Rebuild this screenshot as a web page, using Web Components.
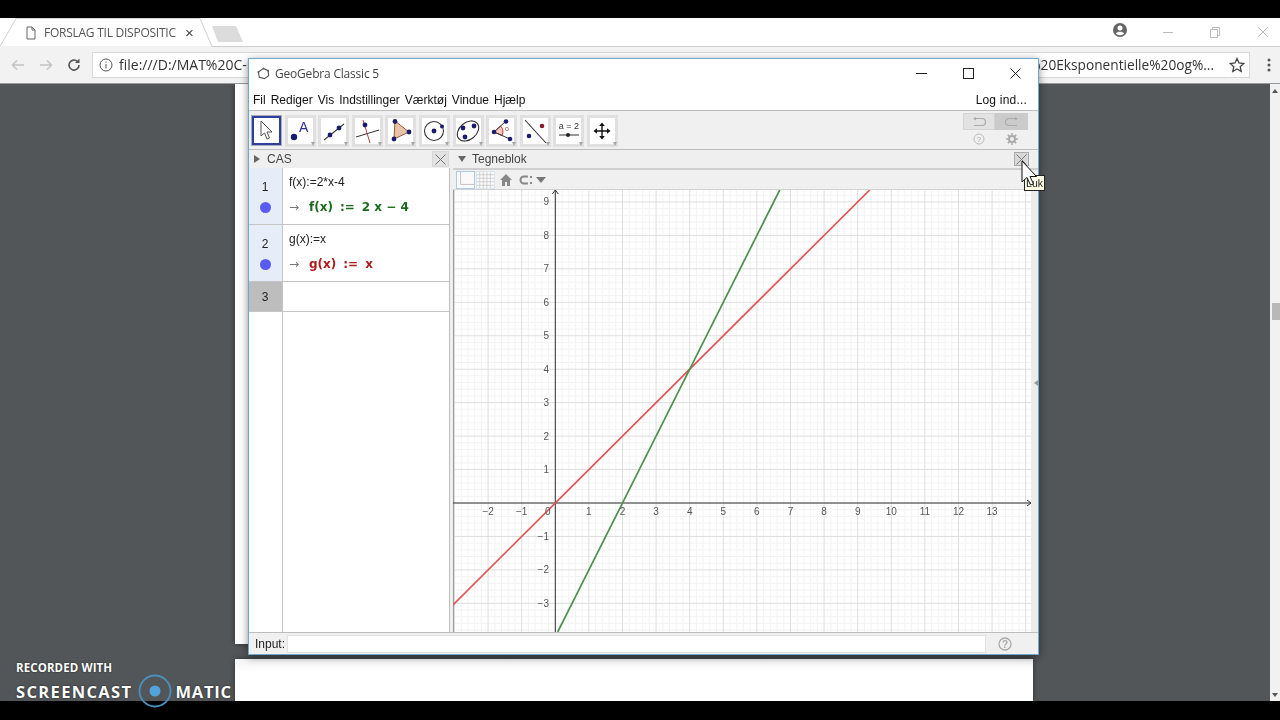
<!DOCTYPE html>
<html lang="da">
<head>
<meta charset="utf-8">
<title>GeoGebra Classic 5</title>
<style>
  html, body { margin: 0; height: 100%; overflow: hidden; background: #000; }
  body { display: flex; flex-direction: column; width: 1280px; height: 720px; position: relative; padding: 18px 0 19px; box-sizing: border-box; }
</style>
</head>
<body>
<browser-chrome></browser-chrome>
<pdf-area></pdf-area>
<gg-window>
  <gg-menubar></gg-menubar>
  <gg-toolbar>
    <gg-tool selected><svg viewBox="0 0 26 26"><path d="M8 4v15l3.500-3 2.500 6 2.500-1-2.500-6h5z" fill="#fff" stroke="#555" stroke-width="1"/></svg></gg-tool>
    <gg-tool><svg viewBox="0 0 26 26"><circle cx="7" cy="19" r="3.200" fill="#1a1a6e"/><text x="12" y="14" font-family="Liberation Sans" font-size="14" fill="#2a2a9a">A</text></svg></gg-tool>
    <gg-tool><svg viewBox="0 0 26 26"><path d="M3 22 23 6" stroke="#333" stroke-width="1.100"/><circle cx="9" cy="17" r="2.400" fill="#1a1a6e"/><circle cx="18" cy="10" r="2.400" fill="#1a1a6e"/></svg></gg-tool>
    <gg-tool><svg viewBox="0 0 26 26"><path d="M2 19 25 12" stroke="#333"/><path d="M9 2 16 25" stroke="#b9413a"/><circle cx="11" cy="7" r="2.400" fill="#1a1a6e"/></svg></gg-tool>
    <gg-tool><svg viewBox="0 0 26 26"><path d="M7 3 21 14 6 21z" fill="#e8c3a8" stroke="#9c5a3a"/><circle cx="7" cy="3.500" r="2.400" fill="#1a1a6e"/><circle cx="21" cy="14" r="2.400" fill="#1a1a6e"/><circle cx="6" cy="21" r="2.400" fill="#1a1a6e"/></svg></gg-tool>
    <gg-tool><svg viewBox="0 0 26 26"><circle cx="13" cy="13" r="9.500" fill="none" stroke="#333" stroke-width="1.100"/><circle cx="13" cy="13" r="2.400" fill="#1a1a6e"/><circle cx="21" cy="8.500" r="2" fill="#1a1a6e"/></svg></gg-tool>
    <gg-tool><svg viewBox="0 0 26 26"><ellipse cx="13" cy="13" rx="12" ry="8.500" transform="rotate(-40 13 13)" fill="none" stroke="#333" stroke-width="1.100"/><circle cx="8" cy="10" r="2.400" fill="#1a1a6e"/><circle cx="19" cy="8" r="2.400" fill="#1a1a6e"/><circle cx="10" cy="19" r="2.400" fill="#1a1a6e"/></svg></gg-tool>
    <gg-tool><svg viewBox="0 0 26 26"><path d="M5 14 11.500 8A8.500 8.500 0 0 1 13 17.500z" fill="#f3c9c2" stroke="#c0392b"/><path d="M17 3 5 14 21 21" fill="none" stroke="#333"/><circle cx="17" cy="3.500" r="2.300" fill="#1a1a6e"/><circle cx="5" cy="14" r="2.300" fill="#1a1a6e"/><circle cx="21" cy="21" r="2.300" fill="#1a1a6e"/><text x="16" y="13" font-family="Liberation Sans" font-size="7" fill="#a33">o</text></svg></gg-tool>
    <gg-tool><svg viewBox="0 0 26 26"><path d="M3 2 24 25" stroke="#333" stroke-width="1.100"/><circle cx="20" cy="8" r="2.300" fill="#8c1c2c"/><circle cx="7" cy="18" r="2.300" fill="#1a1a6e"/></svg></gg-tool>
    <gg-tool><svg viewBox="0 0 26 26"><text x="13" y="11" text-anchor="middle" font-family="Liberation Sans" font-size="9" fill="#333">a = 2</text><path d="M3 17H23" stroke="#333"/><circle cx="12" cy="17" r="2" fill="#222"/></svg></gg-tool>
    <gg-tool><svg viewBox="0 0 26 26"><path d="M13 7V19M7 13H19" stroke="#111" stroke-width="1.400"/><path d="M13 4.500l2.800 3.500h-5.600zM13 21.500l2.800-3.500h-5.600zM4.500 13l3.500-2.800v5.600zM21.500 13l-3.500-2.800v5.600z" fill="#111"/></svg></gg-tool>
    <gg-history slot="end"></gg-history>
  </gg-toolbar>
  <gg-workspace>
    <cas-view>
      <cas-row num="1" dot input="f(x):=2*x-4" color="#1c6b1c"><span>f(x)</span><span>:=</span><span>2 x − 4</span></cas-row>
      <cas-row num="2" dot input="g(x):=x" color="#b01c1c"><span>g(x)</span><span>:=</span><span>x</span></cas-row>
      <cas-row num="3" active></cas-row>
    </cas-view>
    <graphics-view></graphics-view>
  </gg-workspace>
  <gg-inputbar></gg-inputbar>
</gg-window>
<cursor-tip></cursor-tip>
<rec-mark></rec-mark>

<script>
const sans = `"Liberation Sans", Arial, sans-serif`;

class BrowserChrome extends HTMLElement {
  constructor() {
    super();
    this.attachShadow({ mode: 'open' }).innerHTML = `
      <style>
        :host { display: block; flex: none; font-family: "Open Sans", "Noto Sans", sans-serif; color: #444; filter: blur(.3px); }
        .strip { height: 28px; background: #fff; position: relative; display: flex; }
        .strip svg.shape { position: absolute; left: 0; top: 0; overflow: visible; }
        .tab { position: relative; display: flex; align-items: center; margin-left: 24px; width: 172px; font-size: 12px; letter-spacing: -.25px; gap: 6px; padding-top: 1px; }
        .tab .name { width: 132px; white-space: nowrap; color: #555; }
        .tab .x { font: 15px ${sans}; color: #444; margin-left: 3px; }
        .winbtns { margin-left: auto; display: flex; align-items: center; padding-right: 11px; position: relative; }
        .winbtns svg { display: block; }
        .bar { height: 38px; background: #f2f2f2; box-sizing: border-box; display: flex; align-items: center; padding: 0 0 0 10px; border-bottom: 1px solid #999; }
        .nav { display: flex; gap: 12px; align-items: center; margin-right: 10px; }
        .url { flex: none; width: 1158px; height: 26px; box-sizing: border-box; background: #fff; border: 1px solid #d8d8d8; display: flex; align-items: center; padding: 0 0 0 6px; font-size: 14px; color: #333; white-space: nowrap; }
        .url .gap { flex: 1; }
        .url .tail { font-size: 13.700px; }
        .url svg { flex: none; }
      </style>
      <div class="strip">
        <svg class="shape" width="1280" height="28"><path d="M212 8H236L243 24H218z" fill="#dcdcdc"/><path d="M0 28.500 16 .5H200L212 28.500H1280" fill="none" stroke="#cfcfcf"/></svg>
        <div class="tab">
          <svg width="14" height="16" viewBox="0 0 14 16"><path d="M3 2h5l3 3v9H3z" fill="#fff" stroke="#666"/><path d="M8 2v3h3" fill="none" stroke="#666"/></svg>
          <span class="name">FORSLAG TIL DISPOSITIC</span><span class="x">×</span>
        </div>
        <div class="winbtns">
          <svg width="16" height="16" viewBox="0 0 16 16" style="margin:-4px 34px 0 0"><path d="M8 1a7 7 0 1 0 0 14A7 7 0 0 0 8 1z" fill="#666"/><circle cx="8" cy="6" r="2.500" fill="#fff"/><path d="M3.800 11.500c1.500-2.500 6.900-2.500 8.400 0-2 2.200-6.400 2.200-8.400 0z" fill="#fff"/></svg>
          <svg width="12" height="12" style="margin-right:35px"><path d="M1 6.500H11" stroke="#bbb"/></svg>
          <svg width="12" height="12" style="margin-right:36px"><path d="M1.500 3.500h7v8h-7zM3.500 3.500v-2h7v8h-2" fill="none" stroke="#bbb"/></svg>
          <svg width="12" height="12"><path d="M1 1 11 11M11 1 1 11" stroke="#bbb"/></svg>
        </div>
      </div>
      <div class="bar">
        <div class="nav">
          <svg width="16" height="16" viewBox="0 0 16 16"><path d="M14 8H3M7 3.500 2.500 8 7 12.500" fill="none" stroke="#c4c4c4" stroke-width="1.500"/></svg>
          <svg width="16" height="16" viewBox="0 0 16 16"><path d="M2 8H13M9 3.500 13.500 8 9 12.500" fill="none" stroke="#c4c4c4" stroke-width="1.500"/></svg>
          <svg width="16" height="16" viewBox="0 0 16 16"><path d="M13 8a5 5 0 1 1-1.500-3.500" fill="none" stroke="#555" stroke-width="1.600"/><path d="M13.500 1.500v4.500H9z" fill="#555"/></svg>
        </div>
        <div class="url">
          <svg width="14" height="14" viewBox="0 0 14 14" style="margin-right:6px"><circle cx="7" cy="7" r="6" fill="none" stroke="#555"/><path d="M7 6v4.500M7 3.500v1.200" stroke="#555"/></svg>
          <span>file:///D:/MAT%20C-l</span><span class="gap"></span><span class="tail">%20Eksponentielle%20og%...</span>
          <svg width="16" height="16" viewBox="0 0 16 16" style="margin:0 4px 0 15px"><path d="M8 1.500 10 6l4.800.500-3.600 3.200 1 4.800L8 12l-4.200 2.500 1-4.800L1.200 6.500 6 6z" fill="none" stroke="#444" stroke-width="1.300"/></svg>
        </div>
        <svg width="4" height="16" viewBox="0 0 4 16" style="margin-left:17px"><circle cx="2" cy="3" r="1.500" fill="#555"/><circle cx="2" cy="8" r="1.500" fill="#555"/><circle cx="2" cy="13" r="1.500" fill="#555"/></svg>
      </div>`;
  }
}
customElements.define('browser-chrome', BrowserChrome);

class PdfArea extends HTMLElement {
  constructor() {
    super();
    this.attachShadow({ mode: 'open' }).innerHTML = `
      <style>
        :host { display: flex; flex: 1; min-height: 0; background: #525659; }
        .pages { flex: 1; display: flex; flex-direction: column; gap: 15px; padding-left: 235px; overflow: hidden; }
        .page { width: 798px; background: #fff; box-shadow: 0 0 5px rgba(0,0,0,.45); }
        .page.a { flex: 1; }
        .page.b { flex: none; height: 42px; background: linear-gradient(#f4f4f4, #fff 14px); }
        .scroll { width: 10px; background: #f1f1f1; display: flex; flex-direction: column; align-items: center; position: relative; }
        .arr { width: 0; height: 0; border: 3px solid transparent; margin-top: 5px; border-bottom: 4px solid #555; border-top: 0; }
        .arr.d { margin-top: auto; margin-bottom: 4px; border-top: 4px solid #555; border-bottom: 0; }
        .thumb { position: absolute; top: 219px; left: 2px; right: 0; height: 17px; background: #b8b8b8; }
      </style>
      <div class="pages"><div class="page a"></div><div class="page b"></div></div>
      <div class="scroll"><div class="arr"></div><div class="thumb"></div><div class="arr d"></div></div>`;
  }
}
customElements.define('pdf-area', PdfArea);

class GgWindow extends HTMLElement {
  constructor() {
    super();
    this.attachShadow({ mode: 'open' }).innerHTML = `
      <style>
        :host { position: absolute; left: 248px; top: 58px; width: 791px; height: 597px; box-sizing: border-box; display: flex; flex-direction: column; background: #f0f0f0; border: 1px solid #6ea8cb; box-shadow: 0 2px 8px rgba(0,0,0,.45); font-family: ${sans}; filter: blur(.3px); }
        .title { height: 29px; flex: none; background: #fff; display: flex; align-items: center; padding-left: 8px; font: 12px "Open Sans", "Noto Sans", sans-serif; color: #444; letter-spacing: -.2px; }
        .title svg { display: block; }
        .title .name { margin-left: 5px; }
        .btns { margin-left: auto; display: flex; align-items: center; gap: 36px; padding-right: 17px; }
      </style>
      <div class="title">
        <svg width="13" height="13" viewBox="0 0 14 14"><path d="M7 1.500 12 4l.5 5.500L8 12.500 2.500 11 1.500 5.500z" fill="none" stroke="#555" stroke-width="1.200"/><circle cx="7" cy="1.500" r="1" fill="#555"/><circle cx="12" cy="4" r="1" fill="#555"/><circle cx="1.500" cy="5.500" r="1" fill="#555"/></svg>
        <span class="name">GeoGebra Classic 5</span>
        <span class="btns">
          <svg width="11" height="11"><path d="M0 5.500H11" stroke="#222"/></svg>
          <svg width="11" height="11"><rect x=".5" y=".5" width="10" height="10" fill="none" stroke="#222"/></svg>
          <svg width="11" height="11"><path d="M.5.500 10.500 10.500M10.500.500.500 10.500" stroke="#222"/></svg>
        </span>
      </div>
      <slot></slot>`;
  }
}
customElements.define('gg-window', GgWindow);

class GgMenubar extends HTMLElement {
  constructor() {
    super();
    const items = ['Fil', 'Rediger', 'Vis', 'Indstillinger', 'Værktøj', 'Vindue', 'Hjælp'];
    this.attachShadow({ mode: 'open' }).innerHTML = `
      <style>
        :host { display: flex; flex: none; height: 23px; box-sizing: border-box; align-items: center; background: #fff; padding: 2px 11px 0 4px; border-bottom: 1px solid #bdbdbd; font: 12px ${sans}; color: #111; gap: 5px; }
        .end { margin-left: auto; letter-spacing: .2px; }
      </style>
      ${items.map(i => `<span>${i}</span>`).join('')}<span class="end">Log ind...</span>`;
  }
}
customElements.define('gg-menubar', GgMenubar);

class GgToolbar extends HTMLElement {
  constructor() {
    super();
    this.attachShadow({ mode: 'open' }).innerHTML = `
      <style>
        :host { display: flex; flex: none; height: 39px; box-sizing: border-box; align-items: center; gap: 2.600px; padding: 1px 10px 0 3px; background: #f0f0f0; border-bottom: 1px solid #bdbdbd; }
        .end { margin-left: auto; display: block; }
      </style>
      <slot></slot><slot name="end" class="end"></slot>`;
  }
}
customElements.define('gg-toolbar', GgToolbar);

class GgTool extends HTMLElement {
  constructor() {
    super();
    this.attachShadow({ mode: 'open' }).innerHTML = `
      <style>
        :host { display: block; flex: none; width: 31px; height: 32px; box-sizing: border-box; background: #e0e0e0; padding: 3px; position: relative; }
        :host([selected]) { width: 29px; height: 29px; margin-right: 1px; padding: 0; background: #fff; border: 2.500px solid #2e3f9e; outline: 1px solid #aab; }
        .in { width: 25px; height: 26px; background: #fff; display: flex; align-items: center; justify-content: center; }
        ::slotted(svg) { width: 26px; height: 26px; display: block; flex: none; }
        .tri { position: absolute; right: 1px; bottom: 1px; width: 0; height: 0; border: 2.500px solid transparent; border-top: 4px solid #a6a6a6; border-bottom: 0; }
        :host([selected]) .in { width: 24px; height: 24px; }
        :host([selected]) .tri { display: none; }
      </style>
      <div class="in"><slot></slot></div><span class="tri"></span>`;
  }
}
customElements.define('gg-tool', GgTool);

class GgHistory extends HTMLElement {
  constructor() {
    super();
    this.attachShadow({ mode: 'open' }).innerHTML = `
      <style>
        :host { display: grid; grid-template-columns: 32px 33px; grid-template-rows: 17px 18px; }
        .u, .r { display: flex; align-items: center; justify-content: center; border: 1px solid #d4d4d4; background: #e2e2e2; }
        .r { background: #cbcbcb; border-color: #cbcbcb; }
        .c { display: flex; align-items: center; justify-content: center; }
      </style>
      <div class="u"><svg width="16" height="10" viewBox="0 0 16 10"><path d="M5 1.500h6a3.500 3.500 0 0 1 0 7H3" fill="none" stroke="#aaa" stroke-width="1.200"/><path d="M5 0v3.500L2 1.700z" fill="#aaa"/></svg></div>
      <div class="r"><svg width="16" height="10" viewBox="0 0 16 10"><path d="M11 1.500H5a3.500 3.500 0 0 0 0 7h8" fill="none" stroke="#aaa" stroke-width="1.200"/><path d="M11 0v3.500l3-1.800z" fill="#aaa"/></svg></div>
      <div class="c"><svg width="12" height="12" viewBox="0 0 12 12"><circle cx="6" cy="6" r="5" fill="none" stroke="#bbb"/><text x="6" y="9" text-anchor="middle" font-size="8" font-family="Liberation Sans" fill="#aaa">?</text></svg></div>
      <div class="c"><svg width="12" height="12" viewBox="0 0 12 12"><circle cx="6" cy="6" r="3" fill="none" stroke="#aaa" stroke-width="2"/><path d="M6 0v2.500M6 9.500V12M0 6h2.500M9.500 6H12M1.800 1.800l1.800 1.800M8.400 8.400l1.800 1.800M10.200 1.800 8.400 3.600M3.600 8.400 1.800 10.200" stroke="#aaa" stroke-width="1.500"/></svg></div>`;
  }
}
customElements.define('gg-history', GgHistory);

class GgWorkspace extends HTMLElement {
  constructor() {
    super();
    this.attachShadow({ mode: 'open' }).innerHTML = `
      <style>
        :host { display: flex; flex: 1; min-height: 0; background: #f0f0f0; }
      </style>
      <slot></slot>`;
  }
}
customElements.define('gg-workspace', GgWorkspace);

class PanelHead extends HTMLElement {
  constructor() {
    super();
    const open = this.hasAttribute('open');
    this.attachShadow({ mode: 'open' }).innerHTML = `
      <style>
        :host { display: flex; flex: none; height: 18px; align-items: center; background: #efefef; font: 12px ${sans}; color: #444; }
        .tri { width: 0; height: 0; margin-left: 5px; margin-right: 7px; border: 4px solid transparent; }
        .tri.r { border-left: 6px solid #666; border-right: 0; }
        .tri.d { border-top: 6px solid #666; border-bottom: 0; margin-left: 5px; margin-right: 6px; }
        .x { margin-left: auto; width: 17px; height: 16px; box-sizing: border-box; margin-right: 1px; display: flex; align-items: center; justify-content: center; background: #e2e2e2; border: 1px solid #d8d8d8; }
        :host([hot]) .x { width: 15px; height: 14px; border-color: #aaa; background: #d8d8d8; margin-right: 9px; }
      </style>
      <span class="tri ${open ? 'd' : 'r'}"></span><slot></slot>
      <span class="x"><svg width="11" height="11"><path d="M.5.500 10.500 10.500M10.500.500.500 10.500" stroke="#777"/></svg></span>`;
  }
}
customElements.define('panel-head', PanelHead);

class CasView extends HTMLElement {
  constructor() {
    super();
    this.attachShadow({ mode: 'open' }).innerHTML = `
      <style>
        :host { display: flex; flex-direction: column; flex: none; width: 201px; box-sizing: border-box; margin-right: 3px; }
        .body { flex: 1; background: #fff; border-right: 1px solid #bdbdbd; position: relative; display: flex; flex-direction: column; }
        .fill { flex: 1; margin-left: 33px; border-left: 1px solid #c4c4c4; }
      </style>
      <panel-head>CAS</panel-head>
      <div class="body"><slot></slot><div class="fill"></div></div>`;
  }
}
customElements.define('cas-view', CasView);

class CasRow extends HTMLElement {
  constructor() {
    super();
    const num = this.getAttribute('num');
    const input = this.getAttribute('input') || '';
    const color = this.getAttribute('color') || '#000';
    const dot = this.hasAttribute('dot');
    this.attachShadow({ mode: 'open' }).innerHTML = `
      <style>
        :host { display: flex; flex: none; height: 57px; box-sizing: border-box; border-bottom: 1px solid #c4c4c4; font: 12px ${sans}; color: #222; }
        :host([active]) { height: 30px; }
        .n { width: 32px; padding-right: 1px; flex: none; background: #e7edf8; border-right: 1px solid #c4c4c4; display: flex; flex-direction: column; align-items: center; padding-top: 12px; box-sizing: content-box; gap: 8px; }
        :host([active]) .n { background: #bdbdbd; padding-top: 8px; color: #222; }
        .dot { width: 11px; height: 11px; border-radius: 50%; background: #5a5af5; }
        .c { flex: 1; padding: 7px 0 0 6px; }
        .out { display: flex; align-items: center; margin-top: 11px; gap: 8px; font: bold 12px "DejaVu Sans", sans-serif; color: ${color}; }
        .arrow { font: 12px "DejaVu Sans", sans-serif; color: #777; width: 12px; }
        .slots { display: flex; gap: 7px; }
      </style>
      <div class="n"><span>${num}</span>${dot ? '<span class="dot"></span>' : ''}</div>
      <div class="c">${input ? `<div>${input}</div><div class="out"><span class="arrow">→</span><span class="slots"><slot></slot></span></div>` : ''}</div>`;
  }
}
customElements.define('cas-row', CasRow);

class GraphicsView extends HTMLElement {
  constructor() {
    super();
    const W = 578, H = 442, ox = 102.3, oy = 313, ux = 33.6, uy = 33.45;
    let minor = '', major = '', labels = '';
    for (let i = -20; i <= 100; i++) {
      const x = ox + i * ux / 5;
      if (x >= 0 && x <= W) (i % 5 === 0 ? (major += `M${x} 0V${H}`) : (minor += `M${x} 0V${H}`));
    }
    for (let i = -50; i <= 25; i++) {
      const y = oy + i * uy / 5;
      if (y >= 0 && y <= H) (i % 5 === 0 ? (major += `M0 ${y}H${W}`) : (minor += `M0 ${y}H${W}`));
    }
    for (let i = -2; i <= 13; i++) {
      const t = i === 0 ? '0' : String(i).replace('-', '−');
      const lx = i === 0 ? ox - 7.5 : ox + i * ux;
      labels += `<text x="${lx}" y="325" text-anchor="middle">${t}</text>`;
    }
    for (let i = -3; i <= 9; i++) {
      if (i === 0) continue;
      labels += `<text x="96" y="${oy - i * uy + 3.5}" text-anchor="end">${String(i).replace('-', '−')}</text>`;
    }
    const red = `M0 ${oy + ox * uy / ux}L${ox + (oy / uy) * ux} 0`;
    const gx = y => ox + ((y + 4) / 2) * ux;
    const green = `M${gx((oy - H) / uy)} ${H}L${gx(oy / uy)} 0`;
    this.attachShadow({ mode: 'open' }).innerHTML = `
      <style>
        :host { display: flex; flex-direction: column; flex: 1; min-width: 0; }
        .bar { height: 22px; flex: none; box-sizing: border-box; background: #f0f0f0; border-top: 2px solid #cfcfcf; border-bottom: 1px solid #d4d4d4; display: flex; align-items: center; padding-left: 3px; }
        .tb { width: 19px; height: 18px; box-sizing: border-box; border: 1px solid #a9cde6; background: #fafafa; margin-right: 1px; display: block; }
        .tb + .tb { border-color: #d8e4ee; }
        .main { flex: 1; display: flex; min-height: 0; }
        .plot { flex: none; width: 578px; height: 442px; background: #fff; }
        .plot svg { display: block; }
        .plot text { font: 10px ${sans}; fill: #555; }
        .side { flex: 1; position: relative; background: #ececec; }
        .nub { position: absolute; left: 3px; top: 190px; width: 0; height: 0; border: 3px solid transparent; border-right: 4px solid #999; border-left: 0; }
      </style>
      <panel-head open hot>Tegneblok</panel-head>
      <div class="bar">
        <svg class="tb" viewBox="0 0 19 18"><path d="M4 0V14H19" fill="none" stroke="#bbb"/></svg>
        <svg class="tb" viewBox="0 0 19 18"><path d="M3 0V18M7 0V18M11 0V18M15 0V18M0 3H19M0 7H19M0 11H19M0 15H19" stroke="#ccc"/></svg>
        <svg width="14" height="14" viewBox="0 0 14 14" style="margin-left:3px"><path d="M7 1 1 7h2v6h3V9h2v4h3V7h2z" fill="#888"/></svg>
        <svg width="18" height="14" viewBox="0 0 18 14" style="margin-left:4px"><path d="M11 3.500H7a3.500 3.500 0 0 0 0 7h4" fill="none" stroke="#888" stroke-width="2"/><rect x="13" y="3" width="2" height="2" fill="#888"/><rect x="13" y="9" width="2" height="2" fill="#888"/></svg>
        <svg width="10" height="6" viewBox="0 0 10 6" style="margin-left:1px"><path d="M0 0H10L5 6z" fill="#777"/></svg>
      </div>
      <div class="main">
        <div class="plot">
          <svg width="${W}" height="${H}" viewBox="0 0 ${W} ${H}">
            <path d="${minor}" stroke="#f3f3f3" stroke-width="1" fill="none"/>
            <path d="${major}" stroke="#dedede" stroke-width="1" fill="none"/>
            <path d="M.5 0V${H}" stroke="#999" fill="none"/>
            <path d="M${ox} ${H}V0M0 ${oy}H${W}" stroke="#333" stroke-width="1" fill="none"/>
            <path d="M${ox - 3} 4 ${ox} 0 ${ox + 3} 4M${W - 4} ${oy - 3} ${W} ${oy} ${W - 4} ${oy + 3}" stroke="#333" fill="none"/>
            <path d="${red}" stroke="#e25555" stroke-width="1.700" fill="none"/>
            <path d="${green}" stroke="#4f8f4f" stroke-width="1.700" fill="none"/>
            ${labels}
          </svg>
        </div>
        <div class="side"><span class="nub"></span></div>
      </div>`;
  }
}
customElements.define('graphics-view', GraphicsView);

class GgInputbar extends HTMLElement {
  constructor() {
    super();
    this.attachShadow({ mode: 'open' }).innerHTML = `
      <style>
        :host { display: flex; flex: none; height: 22px; box-sizing: border-box; align-items: center; background: #f0f0f0; border-top: 1px solid #bdbdbd; padding: 0 26px 0 6px; font: 12px ${sans}; color: #222; }
        .field { width: 699px; height: 18px; background: #fff; margin: 0 11px 0 2px; border: 1px solid #e2e2e2; box-sizing: border-box; }
        svg { display: block; margin-left: 1px; }
      </style>
      <span>Input:</span><span class="field"></span>
      <svg width="14" height="14" viewBox="0 0 14 14"><circle cx="7" cy="7" r="6" fill="none" stroke="#aaa" stroke-width="1.300"/><text x="7" y="10.500" text-anchor="middle" font-size="10" font-weight="bold" font-family="Liberation Sans" fill="#aaa">?</text></svg>`;
  }
}
customElements.define('gg-inputbar', GgInputbar);

class CursorTip extends HTMLElement {
  constructor() {
    super();
    this.attachShadow({ mode: 'open' }).innerHTML = `
      <style>
        :host { position: absolute; left: 1021px; top: 160px; width: 26px; height: 32px; display: block; font: 10.500px ${sans}; color: #222; filter: blur(.3px); }
        .tip { position: absolute; left: 3px; top: 15px; width: 21px; height: 16px; box-sizing: border-box; background: #fdfde8; border: 1px solid #222; text-align: right; padding-right: 1px; line-height: 14px; }
        svg { position: absolute; left: 0; top: 0; }
      </style>
      <span class="tip">Luk</span>
      <svg width="16" height="27" viewBox="0 0 16 27"><path d="M1 1V22L6 17.500 9.500 25 12.500 24 9 16.500H15.500z" fill="#fff" stroke="#111"/></svg>`;
  }
}
customElements.define('cursor-tip', CursorTip);

class RecMark extends HTMLElement {
  constructor() {
    super();
    this.attachShadow({ mode: 'open' }).innerHTML = `
      <style>
        :host { position: absolute; left: 16px; top: 660px; display: block; font: bold 11.500px "Open Sans", sans-serif; color: #fff; text-shadow: 0 0 2px rgba(0,0,0,.7); }
        .top { letter-spacing: .1px; line-height: 15px; }
        .row { display: flex; align-items: center; height: 32px; font-size: 16.500px; letter-spacing: 1.350px; }
        .row span:last-child { letter-spacing: .8px; }
        svg { display: block; margin: 0 3px 0 6px; flex: none; }
      </style>
      <div class="top">RECORDED WITH</div>
      <div class="row"><span>SCREENCAST</span>
        <svg width="34" height="34" viewBox="0 0 34 34"><circle cx="17" cy="17" r="15.500" fill="none" stroke="#4a8fbd" stroke-width="1.800"/><circle cx="17" cy="17" r="5.500" fill="#52a3dc"/></svg>
        <span>MATIC</span></div>`;
  }
}
customElements.define('rec-mark', RecMark);
</script>
</body>
</html>
